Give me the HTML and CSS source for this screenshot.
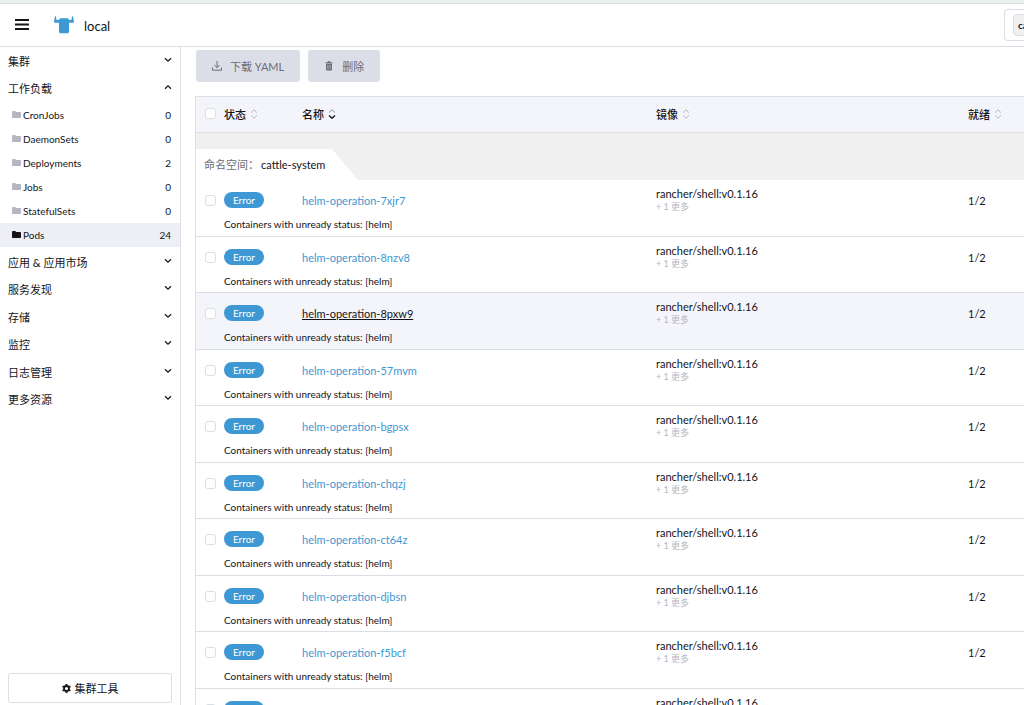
FILE: index.html
```html
<!DOCTYPE html>
<html lang="zh-CN">
<head>
  <meta charset="UTF-8">
  <meta name="viewport" content="width=device-width, initial-scale=1.0">
  <title>local - Pods</title>
  <link rel="stylesheet" href="styles.css">
</head>
<body>

  <svg class="sprite" aria-hidden="true">
    <symbol id="down" viewBox="0 0 8 6"><path d="M1 1.3l3 2.9 3-2.9" fill="none" stroke="currentColor" stroke-width="1.2"/></symbol>
    <symbol id="up" viewBox="0 0 8 6"><path d="M1 4.7l3-2.9 3 2.9" fill="none" stroke="currentColor" stroke-width="1.2"/></symbol>
    <symbol id="folder" viewBox="0 0 9 7"><path d="M0 .8Q0 0 .8 0h2.400l1.100 1h3.900q.8 0 .8.8v4.400q0 .8-.8.8H.8Q0 7 0 6.200z" fill="currentColor"/></symbol>
    <symbol id="sort" viewBox="0 0 8 10"><path d="M1 3.600l3-2.800 3 2.800M1 6.400l3 2.800 3-2.800" fill="none" stroke="#b6b6c2"/></symbol>
    <symbol id="sorted" viewBox="0 0 8 10"><path d="M1 3.600l3-2.800 3 2.800" fill="none" stroke="#8c8c98"/><path d="M1 6.400l3 2.800 3-2.800" fill="none" stroke="#141419" stroke-width="1.400"/></symbol>
  </svg>

  <div class="strip"></div>

  <header class="header">
    <button class="menu" aria-label="菜单">
      <svg width="14" height="11" viewBox="0 0 14 11"><path d="M0 1h14M0 5.500h14M0 10h14" stroke="#141419" stroke-width="2"/></svg>
    </button>
    <svg class="logo" width="20" height="18" viewBox="0 0 20 18" fill="#3d98d3">
      <path d="M1.200.3C1.800 0 2 .5 2.100 1.200c.1 1.500.1 2.700 1.200 2.800H5c.2-.9.7-1.700 1.500-1.700h7c.8 0 1.300.8 1.500 1.700h1.700c1.100-.1 1.100-1.300 1.200-2.800.1-.7.3-1.200.9-.9.5 1 .8 3.200 1.200 5.100 0 .9-.5 1.300-1.200 1.300H15v8.500c0 1.400-.7 2.100-1.800 2.100H6.800C5.700 17.300 5 16.600 5 15.200V6.700H1.200C.5 6.700 0 6.300 0 5.400.4 3.500.7 1.300 1.200.3z"/>
    </svg>
    <span class="cluster">local</span>
    <button class="filter"><span class="tag">cattle-system</span></button>
  </header>

  <div class="page">
    <nav class="sidebar">
      <div class="groups">
        <button class="group">集群<svg width="8" height="6"><use href="#down"/></svg></button>
        <button class="group">工作负载<svg width="8" height="6"><use href="#up"/></svg></button>
        <div class="children">
          <a href="#"><svg width="9" height="7"><use href="#folder"/></svg>CronJobs<span class="count">0</span></a>
          <a href="#"><svg width="9" height="7"><use href="#folder"/></svg>DaemonSets<span class="count">0</span></a>
          <a href="#"><svg width="9" height="7"><use href="#folder"/></svg>Deployments<span class="count">2</span></a>
          <a href="#"><svg width="9" height="7"><use href="#folder"/></svg>Jobs<span class="count">0</span></a>
          <a href="#"><svg width="9" height="7"><use href="#folder"/></svg>StatefulSets<span class="count">0</span></a>
          <a href="#" class="active"><svg width="9" height="7"><use href="#folder"/></svg>Pods<span class="count">24</span></a>
        </div>
        <button class="group">应用 &amp; 应用市场<svg width="8" height="6"><use href="#down"/></svg></button>
        <button class="group">服务发现<svg width="8" height="6"><use href="#down"/></svg></button>
        <button class="group">存储<svg width="8" height="6"><use href="#down"/></svg></button>
        <button class="group">监控<svg width="8" height="6"><use href="#down"/></svg></button>
        <button class="group">日志管理<svg width="8" height="6"><use href="#down"/></svg></button>
        <button class="group">更多资源<svg width="8" height="6"><use href="#down"/></svg></button>
      </div>
      <button class="tools">
        <svg width="9" height="9" viewBox="0 0 9 9"><circle cx="4.500" cy="4.500" r="2.500" fill="none" stroke="#141419" stroke-width="1.800"/><path d="M4.500 0v1.500M4.500 7.500V9M.6 2.250l1.300.75M7.100 6l1.300.75M.6 6.750L1.900 6M7.100 3l1.300-.75" stroke="#141419" stroke-width="1.900"/></svg>
        集群工具
      </button>
    </nav>

    <main class="main">
      <div class="actions">
        <button class="btn" disabled>
          <svg width="10" height="10" viewBox="0 0 10 10" fill="none" stroke="currentColor"><path d="M5 0v6.500M2.300 4L5 6.700 7.700 4M.5 6.500v2.700h9V6.500"/></svg>
          下载 YAML
        </button>
        <button class="btn" disabled>
          <svg width="10" height="10" viewBox="0 0 10 10"><path d="M1.500 1.200h2L4 .3h2l.5.9h2v1.200h-7zM2 3h6v5.500q0 .9-.9.9H2.900Q2 9.400 2 8.500z" fill="currentColor"/><path d="M3.900 4v4.300M6.100 4v4.300" stroke="#dcdee7" stroke-width=".6"/></svg>
          删除
        </button>
      </div>

      <table class="pods" id="pods">
        <colgroup>
          <col class="col-check"><col class="col-state"><col class="col-name"><col><col class="col-ready">
        </colgroup>
        <thead>
          <tr>
            <th><input type="checkbox" aria-label="全选"></th>
            <th><span class="sort">状态<svg width="8" height="10"><use href="#sort"/></svg></span></th>
            <th><span class="sort">名称<svg width="8" height="10"><use href="#sorted"/></svg></span></th>
            <th><span class="sort">镜像<svg width="8" height="10"><use href="#sort"/></svg></span></th>
            <th><span class="sort">就绪<svg width="8" height="10"><use href="#sort"/></svg></span></th>
          </tr>
        </thead>
        <tbody class="namespace">
          <tr><td colspan="5"><div class="tab"><span>命名空间：</span>cattle-system</div></td></tr>
        </tbody>
      </table>
    </main>
  </div>

  <script src="script.js"></script>
</body>
</html>
```

FILE: styles.css
```css
* {
  box-sizing: border-box;
}

body {
  margin: 0;
  height: 100vh;
  display: flex;
  flex-direction: column;
  overflow: hidden;
  background-color: #fff;
  color: #141419;
  font-family: Lato, "Noto Sans CJK SC", sans-serif;
  font-size: 11px;
}

button {
  padding: 0;
  border: none;
  background: none;
  color: inherit;
  font: inherit;
  cursor: pointer;
}

a {
  color: #3d98d3;
  text-decoration: none;
}

.sprite {
  display: none;
}

.strip {
  flex: none;
  height: 4px;
  background-color: #e8f1ec;
  border-bottom: 1px solid #d9e3df;
}

.header {
  flex: none;
  display: flex;
  align-items: center;
  height: 43px;
  padding: 0 0 1px 15px;
  border-bottom: 1px solid #dcdee7;
}

.menu {
  display: flex;
}

.logo {
  margin-left: 25px;
}

.cluster {
  margin-left: 10px;
  padding-top: 3px;
  font-size: 13px;
}

.filter {
  display: flex;
  align-items: center;
  width: 20px;
  height: 32px;
  margin-left: auto;
  padding-left: 8px;
  overflow: hidden;
  border: 1px solid #dcdee7;
  border-right: none;
  border-radius: 4px 0 0 4px;
}

.tag {
  flex: none;
  padding: 0 4px;
  line-height: 20px;
  font-weight: bold;
  font-size: 10px;
  background-color: #f0f0f2;
  border: 1px solid #dcdee7;
  border-radius: 4px;
}

.page {
  flex: 1;
  min-height: 0;
  display: flex;
}

/* sidebar */

.sidebar {
  flex: none;
  display: flex;
  flex-direction: column;
  justify-content: space-between;
  width: 181px;
  border-right: 1px solid #dcdee7;
}

.groups {
  display: flex;
  flex-direction: column;
}

.group {
  display: flex;
  align-items: center;
  justify-content: space-between;
  height: 27px;
  padding: 0 8px 1px;
}

.group svg {
  margin-bottom: 2px;
}

.group:nth-child(odd),
.children ~ .group:nth-child(even) {
  height: 28px;
}

.children ~ .group:nth-child(odd) {
  height: 27px;
}

.children {
  padding: 1px 0;
}

.children a {
  display: flex;
  align-items: center;
  height: 24px;
  padding: 0 9px 0 12px;
  color: #141419;
  font-size: 10px;
}

.children svg {
  margin: 0 2px 2px 0;
  color: #b6b6c2;
}

.children .active {
  background-color: #eeeff4;
}

.children .active svg {
  color: #141419;
}

.count {
  margin-left: auto;
}

.tools {
  display: flex;
  align-items: center;
  justify-content: center;
  gap: 4px;
  height: 30px;
  margin: 0 8px 2px;
  border: 1px solid #dcdee7;
  border-radius: 3px;
}

/* main */

.main {
  flex: 1;
  min-width: 0;
  padding: 3px 0 0 14px;
}

.actions {
  display: flex;
  gap: 8px;
  margin-bottom: 14px;
  padding-left: 1px;
}

.btn {
  display: flex;
  align-items: center;
  gap: 8px;
  height: 32px;
  padding: 0 16px;
  border-radius: 3px;
  background-color: #dcdee7;
  color: #6c6c76;
}

.pods {
  width: 100%;
  table-layout: fixed;
  border-collapse: separate;
  border-spacing: 0;
  border-left: 1px solid #dcdee7;
  border-top: 1px solid #dcdee7;
}

.col-check {
  width: 28px;
}

.col-state {
  width: 78px;
}

.col-name {
  width: 354px;
}

.col-ready {
  width: 56px;
}

.pods th {
  height: 36px;
  padding: 0 0 2px;
  text-align: left;
  font-weight: 500;
  background-color: #f4f5fa;
  border-bottom: 1px solid #dcdee7;
}

.sort {
  display: flex;
  align-items: center;
  gap: 4px;
}

.pods td {
  padding: 0;
}

.pods input {
  appearance: none;
  display: block;
  width: 11px;
  height: 11px;
  margin: 0 0 0 9px;
  background-color: #fff;
  border: 1px solid #dcdee7;
  border-radius: 3px;
}

.namespace td {
  height: 47px;
  vertical-align: bottom;
  background-color: #f0f0f0;
}

.tab {
  width: 162px;
  height: 31px;
  padding-left: 8px;
  line-height: 32px;
  background-color: #fff;
  clip-path: polygon(0 0, 136px 0, 100% 100%, 0 100%);
}

.tab span {
  margin-right: 2px;
  color: #6c6c76;
}

.pods .info td {
  height: 36px;
  padding-top: 4px;
}

.pods .message td {
  height: 21px;
  padding-bottom: 4px;
  line-height: 14px;
  font-size: 10px;
  border-bottom: 1px solid #dcdee7;
}

/* keeps the average row at 56.5px */
.pods .pod:nth-child(odd) .message td {
  height: 20px;
}

.badge {
  display: block;
  width: 40px;
  line-height: 16px;
  border-radius: 8px;
  background-color: #3d98d3;
  color: #fff;
  font-size: 10px;
  text-align: center;
}

.image {
  line-height: 14px;
}

.image small {
  display: block;
  line-height: 12px;
  font-size: 9px;
  color: #b6b6c2;
}

.selected {
  background-color: #f4f5fa;
}

.selected a {
  color: #141419;
  text-decoration: underline;
}
```

FILE: script.js
```js
const pods = ["7xjr7", "8nzv8", "8pxw9", "57mvm", "bgpsx", "chqzj", "ct64z", "djbsn", "f5bcf", "g2k8d"];
const hovered = "8pxw9";
const table = document.getElementById("pods");

pods.forEach(id => {
  const name = `helm-operation-${id}`;
  table.insertAdjacentHTML("beforeend", `
    <tbody class="pod ${id === hovered ? "selected" : ""}">
      <tr class="info">
        <td><input type="checkbox" aria-label="${name}"></td>
        <td><span class="badge">Error</span></td>
        <td><a href="#">${name}</a></td>
        <td class="image">rancher/shell:v0.1.16<small>+ 1 更多</small></td>
        <td>1/2</td>
      </tr>
      <tr class="message">
        <td></td>
        <td colspan="4">Containers with unready status: [helm]</td>
      </tr>
    </tbody>`);
});
```
